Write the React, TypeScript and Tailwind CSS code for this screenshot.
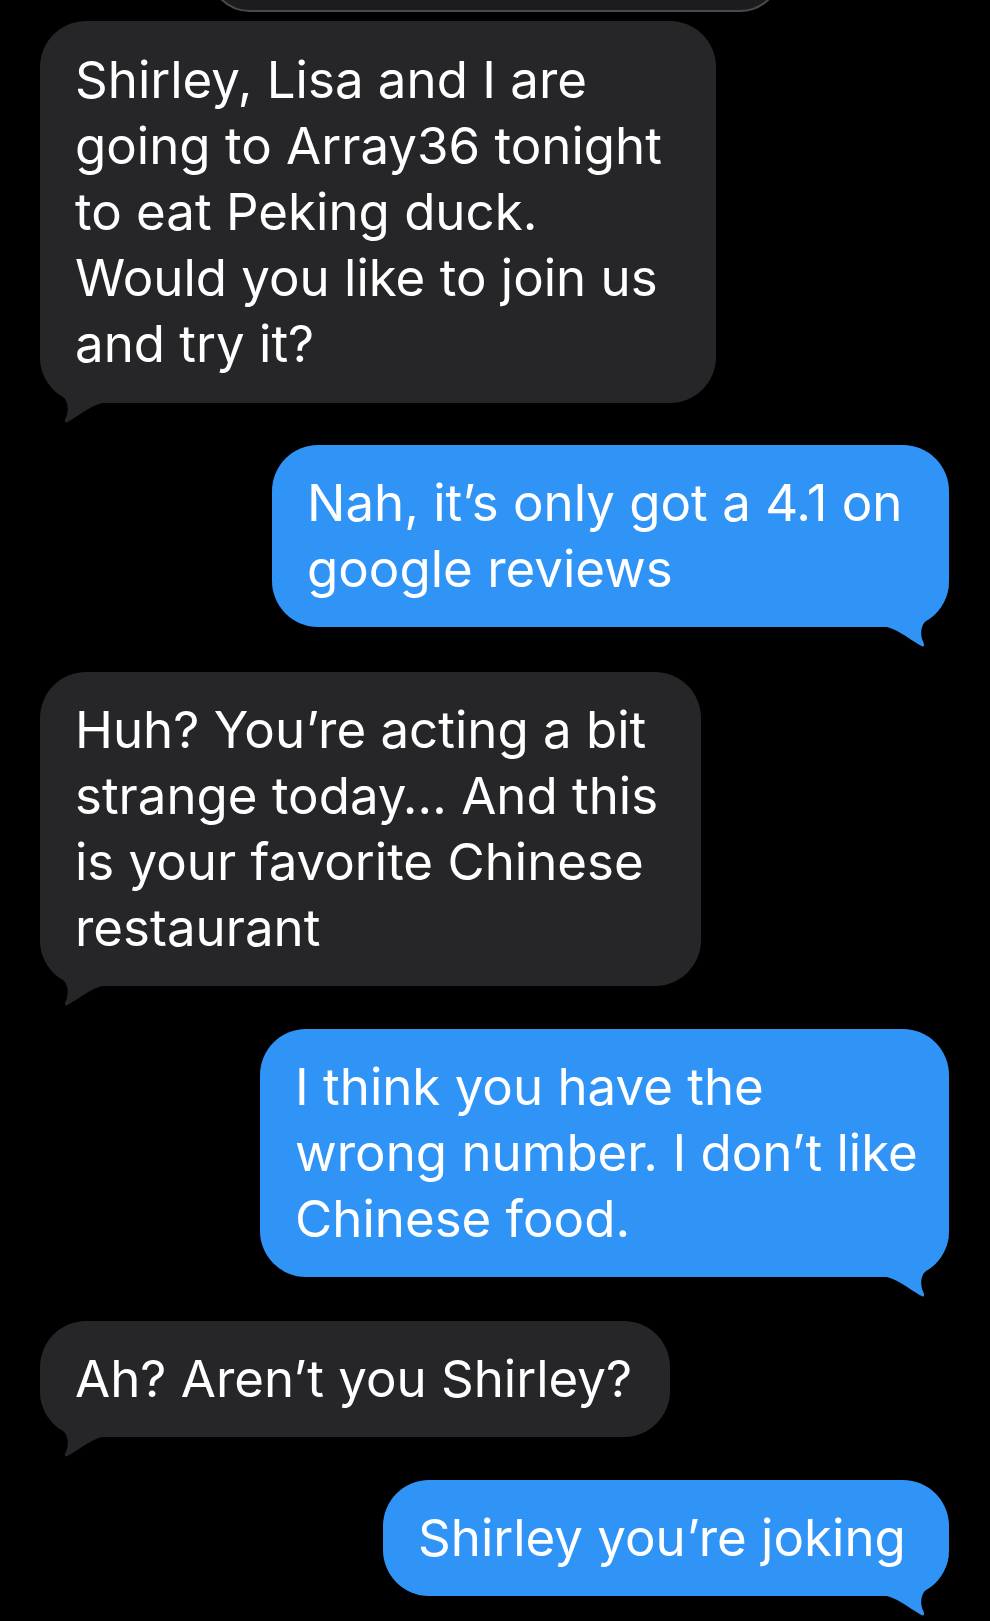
import React from "react";

type Msg = {
  from: "them" | "me";
  lines: string[];
  width: string;
  gap: string;
};

const messages: Msg[] = [
  {
    from: "them",
    width: "w-[676px]",
    gap: "mt-[9px] py-[26px]",
    lines: [
      "Shirley, Lisa and I are",
      "going to Array36 tonight",
      "to eat Peking duck.",
      "Would you like to join us",
      "and try it?",
    ],
  },
  {
    from: "me",
    width: "w-[677px]",
    gap: "mt-[42px] py-[25px]",
    lines: ["Nah, it’s only got a 4.1 on", "google reviews"],
  },
  {
    from: "them",
    width: "w-[661px]",
    gap: "mt-[45px] py-[25px]",
    lines: [
      "Huh? You’re acting a bit",
      "strange today… And this",
      "is your favorite Chinese",
      "restaurant",
    ],
  },
  {
    from: "me",
    width: "w-[689px]",
    gap: "mt-[43px] py-[25px]",
    lines: ["I think you have the", "wrong number. I don’t like", "Chinese food."],
  },
  {
    from: "them",
    width: "w-[630px]",
    gap: "mt-[44px] py-[25px]",
    lines: ["Ah? Aren’t you Shirley?"],
  },
  {
    from: "me",
    width: "w-[566px]",
    gap: "mt-[43px] py-[25px]",
    lines: ["Shirley you’re joking"],
  },
];

// iMessage style tail, drawn for the left corner; flipped for sent bubbles
const Tail = ({ mine }: { mine: boolean }) => (
  <svg
    width="64"
    height="62"
    viewBox="0 0 64 62"
    className={
      mine
        ? "absolute right-0 bottom-[-22px] -scale-x-100"
        : "absolute left-0 bottom-[-22px]"
    }
  >
    <path
      d="M0.4 0 A46 46 0 0 0 23 34 C27 37 29 44 27 52 C26 55 23 59 26.5 59.5 C36 55 48 44 62 40 L62 0 Z"
      fill={mine ? "#3094f7" : "#262629"}
    />
  </svg>
);

export default function App() {
  return (
    <div
      className="h-[1621px] w-full overflow-hidden bg-black text-white"
      style={{ fontFamily: "Inter, 'Noto Sans', sans-serif" }}
    >
      <div className="flex flex-col pl-[40px] pr-[41px]">
        {/* bubble cut off at the top of the screenshot */}
        <div className="-mt-[108px] ml-[168px] h-[120px] w-[574px] rounded-b-[42px] border-2 border-[#4a4a4c] bg-[#1c1c1e]" />

        {messages.map((m, i) => {
          const mine = m.from === "me";
          return (
            <div
              key={i}
              className={`relative ${m.width} ${m.gap} pl-[35px] rounded-[46px] ${
                mine ? "self-end bg-[#3094f7]" : "self-start bg-[#262629]"
              }`}
            >
              <Tail mine={mine} />
              <div className="relative text-[51px] leading-[66px] tracking-[0px]">
                {m.lines.map((line, j) => (
                  <div key={j} className="whitespace-nowrap">
                    {line}
                  </div>
                ))}
              </div>
            </div>
          );
        })}
      </div>
    </div>
  );
}
